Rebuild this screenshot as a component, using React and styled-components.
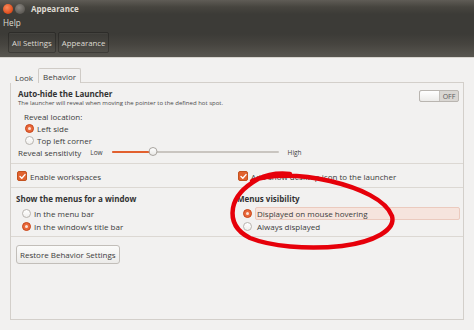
import styled, { createGlobalStyle } from "styled-components";

const GlobalStyle = createGlobalStyle`
  html, body {
    margin: 0;
    padding: 0;
    background: #f2f1f0;
  }
  body {
    font-family: "Open Sans", "Noto Sans", sans-serif;
    color: #3c3c3c;
    overflow: hidden;
  }
`;

const Window = styled.div`
  position: relative;
  width: 474px;
  height: 330px;
  background: #f2f1f0;
  display: flex;
  flex-direction: column;
  overflow: hidden;
`;

const Header = styled.div`
  height: 57px;
  display: flex;
  flex-direction: column;
  background: linear-gradient(
    to bottom,
    #5f5c56 0px,
    #47453f 7px,
    #3c3b37 14px,
    #3c3b37 34px,
    #46443f 44px,
    #57554f 56px
  );
  border-bottom: 1px solid #d8d5d0;
  color: #dfdbd2;
`;

const TitleBar = styled.div`
  height: 17px;
  display: flex;
  align-items: center;
  padding-left: 3px;
  gap: 2px;
`;

const WinButton = styled.span`
  width: 10px;
  height: 10px;
  border-radius: 50%;
  background: ${(p) =>
    p.$close
      ? "radial-gradient(circle at 40% 35%, #f98a5c, #df4b1a 70%)"
      : "radial-gradient(circle at 40% 35%, #8a8782, #5e5b56 70%)"};
`;

const Title = styled.span`
  margin-left: 4px;
  font-size: 8px;
  font-weight: 700;
`;

const MenuBar = styled.div`
  height: 11px;
  display: flex;
  align-items: center;
  padding-left: 3px;
  font-size: 8.2px;
`;

const Toolbar = styled.div`
  flex: 1;
  display: flex;
  align-items: center;
  padding: 0 8px;
  gap: 2px;
`;

const ToolButton = styled.div`
  height: 19px;
  display: flex;
  align-items: center;
  padding: 0 3px;
  font-size: 7.8px;
  border: 1px solid rgba(0, 0, 0, 0.25);
  border-radius: 2px;
  box-shadow: inset 0 1px rgba(255, 255, 255, 0.04);
`;

const Body = styled.div`
  flex: 1;
  display: flex;
  flex-direction: column;
  padding: 9px 10px 10px 10px;
`;

const Tabs = styled.div`
  display: flex;
  align-items: flex-end;
  height: 15px;
`;

const Tab = styled.div`
  height: ${(p) => (p.$active ? "15px" : "13px")};
  display: flex;
  align-items: center;
  padding: 0 4px;
  font-size: 8px;
  box-sizing: border-box;
  margin-bottom: -1px;
  background: #f2f1f0;
  border: 1px solid ${(p) => (p.$active ? "#cfcbc6" : "transparent")};
  border-bottom: none;
  border-radius: 2px 2px 0 0;
  position: relative;
  z-index: 1;
`;

const Panel = styled.div`
  flex: 1;
  border: 1px solid #d3cfca;
  display: flex;
  flex-direction: column;
`;

const Section = styled.div`
  padding: ${(p) => p.$pad || "0 4px 0 7px"};
  border-bottom: ${(p) => (p.$line ? "1px solid #dcd8d3" : "none")};
`;

const HeadRow = styled.div`
  display: flex;
  justify-content: space-between;
  align-items: flex-start;
`;

const Heading = styled.div`
  font-size: 8px;
  font-weight: 700;
  line-height: 10px;
  color: #333;
`;

const Description = styled.div`
  font-size: 6px;
  line-height: 8px;
  color: #4a4a4a;
`;

const Toggle = styled.div`
  margin-top: 1px;
  width: 40px;
  height: 12px;
  box-sizing: border-box;
  border: 1px solid #b9b5b0;
  border-radius: 2px;
  display: flex;
  background: #d9d6d2;
`;

const Knob = styled.div`
  width: 19px;
  background: linear-gradient(#ffffff, #ecebe9);
  border-right: 1px solid #c4c0bb;
  border-radius: 2px 0 0 2px;
`;

const ToggleText = styled.div`
  flex: 1;
  display: flex;
  align-items: center;
  justify-content: center;
  font-size: 7px;
  color: #5a5a5a;
`;

const Label = styled.div`
  font-size: 8px;
  line-height: 10px;
  margin-left: ${(p) => p.$indent || "0"};
  margin-top: ${(p) => p.$top || "0"};
`;

const OptionRow = styled.div`
  display: flex;
  align-items: center;
  height: ${(p) => p.$h || "12px"};
  margin-left: ${(p) => p.$indent || "0"};
  margin-top: ${(p) => p.$top || "0"};
  gap: 3px;
  font-size: 8px;
`;

const Radio = styled.span`
  width: 9px;
  height: 9px;
  box-sizing: border-box;
  border-radius: 50%;
  flex-shrink: 0;
  position: relative;
  border: 1px solid ${(p) => (p.$checked ? "#c8461a" : "#b8b4af")};
  background: ${(p) =>
    p.$checked ? "#e9683a" : "linear-gradient(#ffffff, #f0efed)"};
  &::after {
    content: "";
    display: ${(p) => (p.$checked ? "block" : "none")};
    position: absolute;
    left: 2px;
    top: 2px;
    width: 3px;
    height: 3px;
    border-radius: 50%;
    background: #fbe3d8;
  }
`;

const Highlight = styled.span`
  flex: 1;
  height: 13px;
  display: flex;
  align-items: center;
  padding-left: 1px;
  background: ${(p) => (p.$on ? "#f6e4dd" : "transparent")};
  border: 1px solid ${(p) => (p.$on ? "#ebcabe" : "transparent")};
  border-radius: 2px;
  box-sizing: border-box;
`;

const SliderRow = styled.div`
  display: flex;
  align-items: center;
  height: 12px;
  font-size: 8px;
`;

const Small = styled.span`
  font-size: 6.5px;
  margin: ${(p) => p.$m || "0"};
`;

const Track = styled.div`
  width: 167px;
  height: 2px;
  background: #c9c5c0;
  position: relative;
  border-radius: 1px;
`;

const Fill = styled.div`
  height: 100%;
  background: #e2602e;
  border-radius: 1px;
`;

const Handle = styled.span`
  position: absolute;
  top: -4px;
  width: 9px;
  height: 9px;
  border-radius: 50%;
  box-sizing: border-box;
  border: 1px solid #a9a5a0;
  background: linear-gradient(#ffffff, #e9e8e6);
  transform: translateX(-50%);
`;

const Columns = styled.div`
  display: grid;
  grid-template-columns: 221px 1fr;
`;

const Check = styled.span`
  width: 10px;
  height: 10px;
  border-radius: 2px;
  background: #e1622f;
  border: 1px solid #c3521f;
  box-sizing: border-box;
  display: flex;
  align-items: center;
  justify-content: center;
  flex-shrink: 0;
`;

const Button = styled.div`
  align-self: flex-start;
  margin: 8px 0 0 5px;
  height: 19px;
  box-sizing: border-box;
  display: flex;
  align-items: center;
  padding: 0 3px;
  font-size: 8px;
  color: #3c3c3c;
  border: 1px solid #c2beb9;
  border-radius: 3px;
  background: linear-gradient(#fbfbfa, #ecebe9);
`;

const Scribble = styled.svg`
  position: absolute;
  left: 0;
  top: 0;
  pointer-events: none;
`;

const CheckMark = () => (
  <svg width="7" height="7" viewBox="0 0 7 7">
    <path d="M1 3.6 L2.8 5.3 L6 1.6" fill="none" stroke="#fff" strokeWidth="1.4" strokeLinecap="round" strokeLinejoin="round" />
  </svg>
);

const App = () => {
  const sensitivity = 0.25;
  return (
    <Window>
      <GlobalStyle />
      <Header>
        <TitleBar>
          <WinButton $close />
          <WinButton />
          <Title>Appearance</Title>
        </TitleBar>
        <MenuBar>Help</MenuBar>
        <Toolbar>
          <ToolButton>All Settings</ToolButton>
          <ToolButton>Appearance</ToolButton>
        </Toolbar>
      </Header>
      <Body>
        <Tabs>
          <Tab>Look</Tab>
          <Tab $active>Behavior</Tab>
        </Tabs>
        <Panel>
          <Section $pad="6px 4px 5px 7px" $line>
            <HeadRow>
              <div>
                <Heading>Auto-hide the Launcher</Heading>
                <Description>
                  The launcher will reveal when moving the pointer to the defined hot spot.
                </Description>
              </div>
              <Toggle>
                <Knob />
                <ToggleText>OFF</ToggleText>
              </Toggle>
            </HeadRow>
            <Label $indent="6px" $top="5px">Reveal location:</Label>
            <OptionRow $indent="7px">
              <Radio $checked />
              Left side
            </OptionRow>
            <OptionRow $indent="7px">
              <Radio />
              Top left corner
            </OptionRow>
            <SliderRow>
              Reveal sensitivity
              <Small $m="0 9px 0 9px">Low</Small>
              <Track>
                <Fill style={{ width: `${sensitivity * 100}%` }} />
                <Handle style={{ left: `${sensitivity * 100}%` }} />
              </Track>
              <Small $m="0 0 0 9px">High</Small>
            </SliderRow>
          </Section>
          <Section $pad="6px 3px 5px 5px" $line>
            <Columns>
              <OptionRow $indent="1px">
                <Check><CheckMark /></Check>
                Enable workspaces
              </OptionRow>
              <OptionRow $indent="1px">
                <Check><CheckMark /></Check>
                Add show desktop icon to the launcher
              </OptionRow>
            </Columns>
          </Section>
          <Section $pad="6px 3px 3px 5px" $line>
            <Columns>
              <div>
                <Heading>Show the menus for a window</Heading>
                <OptionRow $h="13px" $indent="6px" $top="3px">
                  <Radio />
                  In the menu bar
                </OptionRow>
                <OptionRow $h="13px" $indent="6px">
                  <Radio $checked />
                  In the window's title bar
                </OptionRow>
              </div>
              <div>
                <Heading>Menus visibility</Heading>
                <OptionRow $h="13px" $indent="6px" $top="3px">
                  <Radio $checked />
                  <Highlight $on>Displayed on mouse hovering</Highlight>
                </OptionRow>
                <OptionRow $h="13px" $indent="6px">
                  <Radio />
                  <Highlight>Always displayed</Highlight>
                </OptionRow>
              </div>
            </Columns>
          </Section>
          <Button>Restore Behavior Settings</Button>
        </Panel>
      </Body>
      <Scribble width="474" height="330" viewBox="0 0 474 330">
        <path
          d="M252 181 C268 174 300 174 330 181 C360 188 386 200 392 216 C396 230 374 242 342 246 C306 250 270 246 250 238 C236 231 231 220 233 208 C235 196 244 187 258 179 C268 174 280 173 290 174"
          fill="none"
          stroke="#e6000a"
          strokeWidth="4.5"
          strokeLinecap="round"
          strokeLinejoin="round"
        />
      </Scribble>
    </Window>
  );
};

export default App;
